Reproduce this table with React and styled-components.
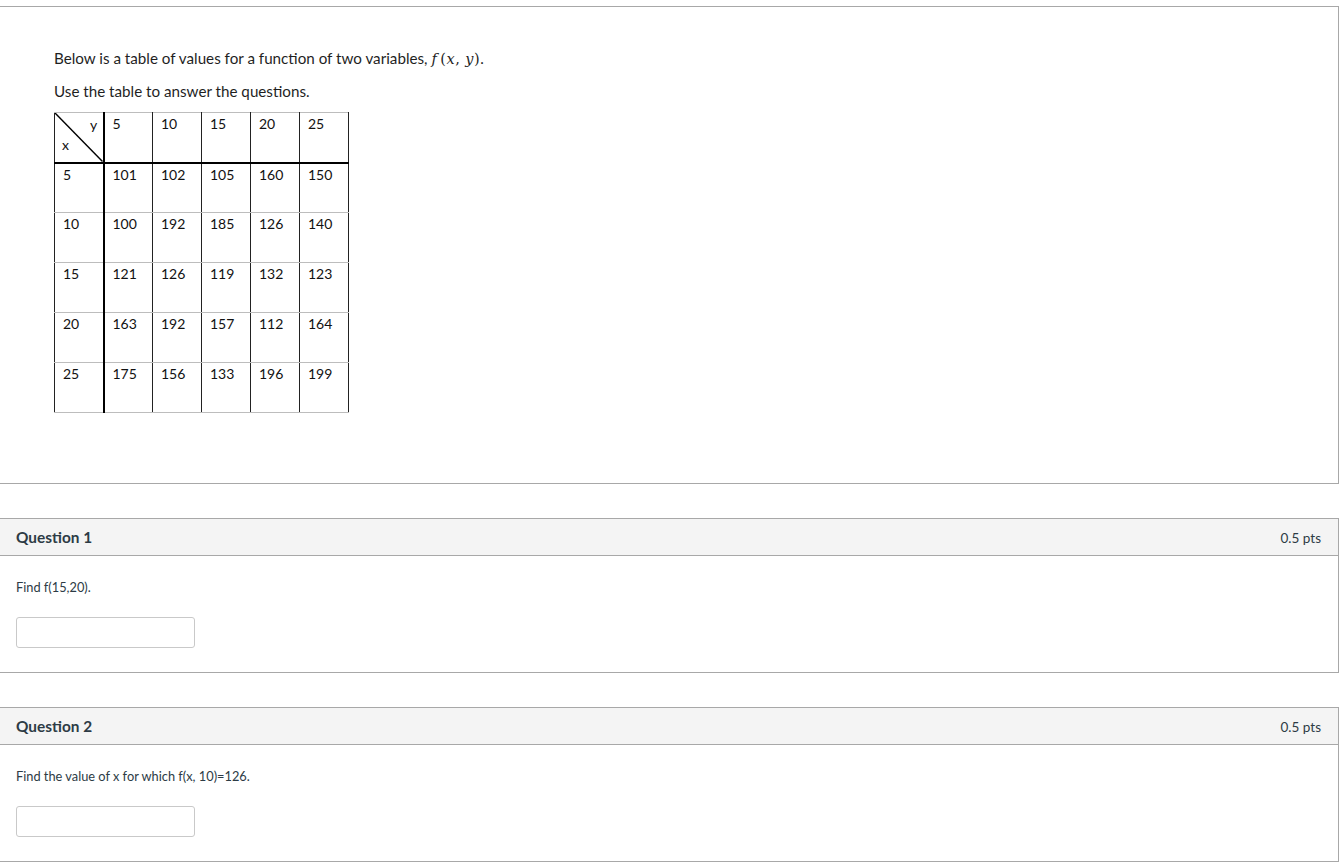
import React from 'react'
import styled, { createGlobalStyle } from 'styled-components'

const GlobalStyle = createGlobalStyle`
  body {
    margin: 0;
    background: #fff;
    font-family: Lato, "Open Sans", sans-serif;
    color: #2d3b45;
  }
`

const Page = styled.div`
  width: 1340px;
  margin-left: -1px;
  padding-top: 6px;
  display: flex;
  flex-direction: column;
  gap: 34px;
`

const Card = styled.div`
  border: 1px solid #a8a8a8;
  background: #fff;
`

const Intro = styled.div`
  padding: 41px 54px 70px;
  color: #1f1f1f;
  font-size: 15.2px;
`

const Para = styled.p`
  margin: 0 0 ${p => p.gap || 0}px;
  line-height: 20px;
`

const Math = styled.span`
  font-family: "DejaVu Serif", "Liberation Serif", serif;
  font-size: 14.5px;
  letter-spacing: 0.5px;
`

const Var = styled.i`
  margin-right: ${p => p.$space || 0}px;
`

const Grid = styled.table`
  border-collapse: collapse;
  border: 1px solid #000;
  font-size: 14px;
  color: #111;
`

const Cell = styled.td`
  width: 49px;
  height: 50px;
  padding: 3px 8px 0;
  vertical-align: top;
  text-align: left;
  border-left: 1px solid #222;
  border-right: ${p => (p.$stub ? '2px solid #000' : '1px solid #222')};
  border-top: 1px solid #bdbdbd;
  border-bottom: ${p => (p.$head ? '2px solid #000' : '1px solid #bdbdbd')};
  box-sizing: border-box;
  line-height: 16px;
`

const Corner = styled(Cell)`
  position: relative;
  padding: 0;
`

const Diagonal = styled.svg`
  position: absolute;
  inset: 0;
  width: 100%;
  height: 100%;
`

const CornerLabel = styled.span`
  position: absolute;
  top: ${p => p.$top}px;
  left: ${p => p.$left}px;
  line-height: 16px;
`

const Header = styled.div`
  height: 36px;
  background: #f4f4f4;
  border-bottom: 1px solid #a8a8a8;
  display: flex;
  align-items: center;
  justify-content: space-between;
  padding: 0 17px 0 16px;
`

const Title = styled.span`
  font-weight: 700;
  font-size: 15.4px;
  color: #2d3b45;
`

const Points = styled.span`
  font-size: 13.5px;
  color: #2d3b45;
  padding-top: 1px;
`

const Body = styled.div`
  padding: 22px 16px 24px;
  font-size: 12.8px;
`

const Prompt = styled.div`
  line-height: 18px;
  margin-bottom: 21px;
`

const Answer = styled.input`
  display: block;
  box-sizing: border-box;
  width: 179px;
  height: 31px;
  border: 1px solid #c9c9c9;
  border-radius: 3px;
  background: #fff;
`

const cols = [5, 10, 15, 20, 25]
const rows = [
  [5, 101, 102, 105, 160, 150],
  [10, 100, 192, 185, 126, 140],
  [15, 121, 126, 119, 132, 123],
  [20, 163, 192, 157, 112, 164],
  [25, 175, 156, 133, 196, 199],
]

function Question({ n, text }) {
  return (
    <Card>
      <Header>
        <Title>Question {n}</Title>
        <Points>0.5 pts</Points>
      </Header>
      <Body>
        <Prompt>{text}</Prompt>
        <Answer type="text" />
      </Body>
    </Card>
  )
}

export default function App() {
  return (
    <Page>
      <GlobalStyle />
      <Card>
        <Intro>
          <Para gap={12}>
            Below is a table of values for a function of two variables,{' '}
            <Math>
              <Var $space={3}>f</Var>(<Var>x</Var>, <Var>y</Var>)
            </Math>
            .
          </Para>
          <Para gap={11}>Use the table to answer the questions.</Para>
          <Grid>
            <tbody>
              <tr>
                <Corner $stub $head>
                  <Diagonal viewBox="0 0 49 50" preserveAspectRatio="none">
                    <line x1="0" y1="0" x2="49" y2="50" stroke="#000" strokeWidth="1.5" />
                  </Diagonal>
                  <CornerLabel $top={4} $left={35}>y</CornerLabel>
                  <CornerLabel $top={24} $left={7}>x</CornerLabel>
                </Corner>
                {cols.map(c => (
                  <Cell key={c} $head>{c}</Cell>
                ))}
              </tr>
              {rows.map(r => (
                <tr key={r[0]}>
                  {r.map((v, i) => (
                    <Cell key={i} $stub={i === 0}>{v}</Cell>
                  ))}
                </tr>
              ))}
            </tbody>
          </Grid>
        </Intro>
      </Card>
      <Question n={1} text="Find f(15,20)." />
      <Question n={2} text="Find the value of x for which f(x, 10)=126." />
    </Page>
  )
}
